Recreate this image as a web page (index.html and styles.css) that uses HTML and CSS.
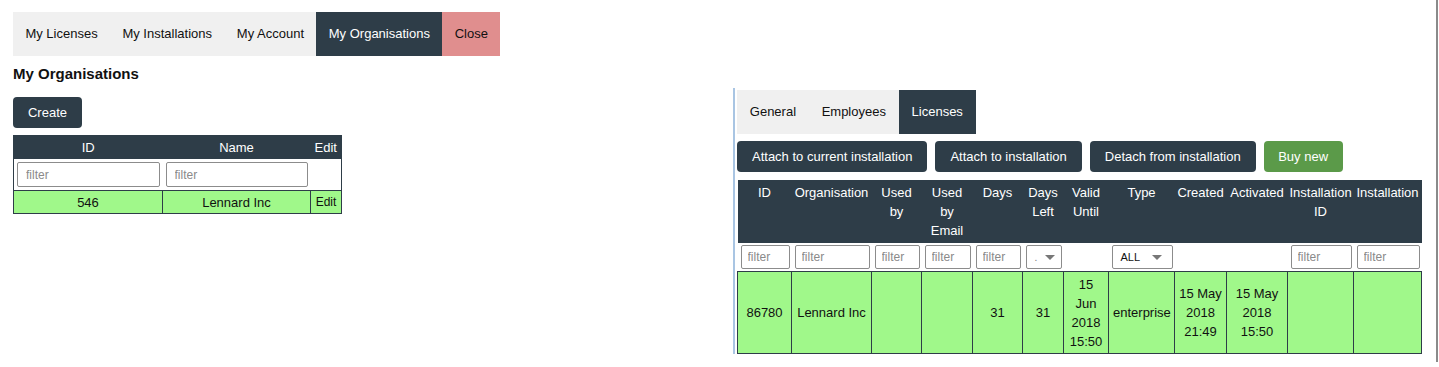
FILE: index.html
```html
<!DOCTYPE html>
<html>
<head>
<meta charset="utf-8">
<link rel="stylesheet" href="styles.css">
</head>
<body>
<div class="page">
  <nav class="nav">
    <a class="tab">My Licenses</a>
    <a class="tab">My Installations</a>
    <a class="tab">My Account</a>
    <a class="tab active">My Organisations</a>
    <a class="tab close">Close</a>
  </nav>
  <h2 class="title">My Organisations</h2>
  <div class="columns">
    <div class="left">
      <button class="btn create">Create</button>
      <table class="grid org">
        <colgroup><col style="width:149px"><col style="width:148px"><col style="width:31px"></colgroup>
        <thead>
          <tr class="head"><th>ID</th><th>Name</th><th>Edit</th></tr>
          <tr class="filters"><td><input placeholder="filter"></td><td><input placeholder="filter"></td><td></td></tr>
        </thead>
        <tbody>
          <tr class="row"><td>546</td><td>Lennard Inc</td><td class="edit">Edit</td></tr>
        </tbody>
      </table>
    </div>
    <div class="right">
      <div class="subnav">
        <a class="tab">General</a>
        <a class="tab">Employees</a>
        <a class="tab active">Licenses</a>
      </div>
      <div class="actions">
        <button class="btn">Attach to current installation</button>
        <button class="btn">Attach to installation</button>
        <button class="btn">Detach from installation</button>
        <button class="btn buy">Buy new</button>
      </div>
      <table class="grid lic">
        <colgroup>
          <col style="width:54px"><col style="width:80px"><col style="width:50px"><col style="width:51px">
          <col style="width:50px"><col style="width:41px"><col style="width:45px"><col style="width:66px">
          <col style="width:52px"><col style="width:61px"><col style="width:66px"><col style="width:68px">
        </colgroup>
        <thead>
          <tr class="head">
            <th>ID</th><th>Organisation</th><th>Used by</th><th>Used by Email</th><th>Days</th><th>Days Left</th>
            <th>Valid Until</th><th>Type</th><th>Created</th><th>Activated</th><th>Installation ID</th><th>Installation</th>
          </tr>
          <tr class="filters">
            <td><input placeholder="filter"></td>
            <td><input placeholder="filter"></td>
            <td><input placeholder="filter"></td>
            <td><input placeholder="filter"></td>
            <td><input placeholder="filter"></td>
            <td><div class="select small"><span class="val">.</span><span class="caret"></span></div></td>
            <td></td>
            <td><div class="select"><span class="val">ALL</span><span class="caret"></span></div></td>
            <td></td>
            <td></td>
            <td><input placeholder="filter"></td>
            <td><input placeholder="filter"></td>
          </tr>
        </thead>
        <tbody>
          <tr class="row">
            <td>86780</td><td>Lennard Inc</td><td></td><td></td><td>31</td><td>31</td>
            <td>15 Jun 2018 15:50</td><td>enterprise</td><td>15 May 2018 21:49</td><td>15 May 2018 15:50</td><td></td><td></td>
          </tr>
        </tbody>
      </table>
    </div>
  </div>
</div>
</body>
</html>
```

FILE: styles.css
```css
html, body {
  margin: 0;
  padding: 0;
  background: #fff;
}
body {
  font-family: "Liberation Sans", Arial, Helvetica, sans-serif;
  font-size: 13px;
  color: #111;
}
.page {
  width: 1438px;
  height: 362px;
  border-right: 2px solid #8a8a8a;
  box-sizing: border-box;
  padding: 12px 0 0 13px;
}
.nav, .subnav {
  display: flex;
  background: #f0f0f0;
  width: max-content;
}
.tab {
  display: block;
  height: 44px;
  line-height: 44px;
  padding: 0 12.4px;
  color: #111;
  cursor: pointer;
}
.subnav .tab {
  padding: 0 12.8px;
}
.tab.active {
  background: #2e3d48;
  color: #fff;
}
.tab.close {
  background: #e08e8e;
}
.title {
  margin: 0;
  font-size: 15px;
  font-weight: bold;
  line-height: 20px;
  padding-top: 8px;
  color: #111;
}
.columns {
  display: flex;
  margin-top: 4px;
}
.left {
  width: 707px;
  padding-top: 9px;
}
.btn {
  font-family: inherit;
  font-size: 13px;
  color: #fff;
  background: #2e3d48;
  border: none;
  border-radius: 4px;
  height: 31px;
  padding: 0 15px;
  cursor: pointer;
}
.btn.create {
  width: 69px;
  padding: 0;
  display: block;
}
.btn.buy {
  background: #5b9a49;
  width: 79px;
  padding: 0;
}
.grid {
  border-collapse: collapse;
  table-layout: fixed;
  margin-top: 7px;
}
.grid th, .grid td {
  padding: 0;
  text-align: center;
  font-weight: normal;
}
.head th {
  background: #2e3d48;
  color: #fff;
  line-height: 19px;
}
.org .head th {
  height: 23px;
}
.org {
  border: 1px solid #2e3d48;
}
.org .filters td {
  height: 31px;
  padding: 0 3px;
}
.grid input {
  display: block;
  width: 100%;
  box-sizing: border-box;
  height: 25px;
  border: 1px solid #8c8c8c;
  border-radius: 2px;
  font-family: inherit;
  font-size: 12px;
  padding: 0 8px;
  color: #333;
  background: #fff;
}
.grid input::placeholder {
  color: #8a8a8a;
}
.row td {
  background: #a0f88a;
  border: 1px solid #2e3d48;
  line-height: 19px;
}
.org .row td {
  height: 22px;
}
.org .row td.edit {
  font-size: 12px;
}
.right {
  border-left: 2px solid #a9c5e3;
  padding: 2px 0 0 2px;
  margin-left: 13px;
}
.actions {
  display: flex;
  gap: 8px;
  margin-top: 7px;
}
.lic {
  margin-top: 8px;
  width: 684px;
}
.lic .head th {
  height: 60px;
  vertical-align: top;
  padding: 3px 2px 0;
}
.lic .filters td {
  height: 28px;
  padding: 0 2px 0 3px;
}
.lic .filters input {
  height: 24px;
  padding: 0 6px;
}
.lic .row td {
  height: 81px;
  padding: 0 4px;
}
.select {
  display: flex;
  align-items: center;
  justify-content: space-between;
  height: 24px;
  border: 1px solid #8c8c8c;
  border-radius: 2px;
  box-sizing: border-box;
  padding: 0 10px 0 8px;
  font-size: 11px;
  background: #fff;
  color: #111;
}
.select.small {
  padding: 0 6px 0 8px;
}
.select.small .val {
  color: #777;
  font-size: 10px;
}
.caret {
  width: 0;
  height: 0;
  border-left: 5px solid transparent;
  border-right: 5px solid transparent;
  border-top: 5px solid #777;
}
```
